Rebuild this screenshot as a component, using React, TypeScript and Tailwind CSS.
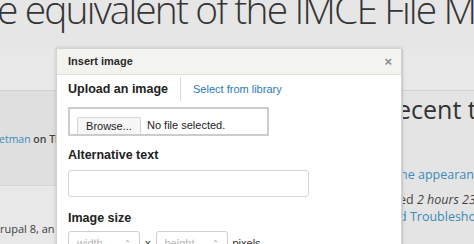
import React from 'react';

function NumberBox({ placeholder }: { placeholder: string }) {
  return (
    <div className="flex h-[26px] w-[72px] items-center justify-between rounded-[3px] border border-[#cfcfcf] bg-white px-2">
      <span className="text-[11px] text-[#b5b5b5]">{placeholder}</span>
      <span className="text-[8px] text-[#999]">⌃</span>
    </div>
  );
}

export default function App() {
  return (
    <div className="relative h-[244px] w-[474px] overflow-hidden bg-[#e6e6e6] font-['Open_Sans',sans-serif]">
      {/* Page title, cropped */}
      <div className="h-[49px] overflow-hidden whitespace-nowrap">
        <div className="-ml-[3px] -mt-[19px] text-[39px] font-light leading-[56px] tracking-[-1.9px] text-[#353535]">
          e equivalent of the IMCE File Ma
        </div>
      </div>

      {/* Page body behind the dialog */}
      <div className="flex h-[195px]">
        {/* left column */}
        <div className="flex w-[57px] shrink-0 flex-col overflow-hidden whitespace-nowrap">
          <div className="h-[42px] border-b border-[#d2d2d2] bg-[#e8e8e8]" />
          <div className="h-[95px] border-b border-[#d6d6d6] bg-[#dfdfdf] pt-[41px]">
            <div className="-ml-[1px] text-[10.5px] leading-[14px]">
              <span className="text-[#3d8bb8]">etman</span>
              <span className="font-semibold text-[#444]"> on Th</span>
            </div>
          </div>
          <div className="flex-1 bg-[#e8e8e8]">
            <div className="mt-[36px] text-[11px] leading-[14px] text-[#3e3e3e]">rupal 8, an</div>
          </div>
        </div>

        <div className="w-[345px] shrink-0" />

        {/* right column */}
        <div className="flex min-w-0 flex-1 flex-col overflow-hidden whitespace-nowrap border-l border-[#d6d6d6]">
          <div className="h-[42px] border-b border-[#d2d2d2] bg-[#e8e8e8]" />
          <div className="flex-1 bg-[#e4e4e4]">
            <div className="-ml-[6px] mt-[2px] text-[25px] leading-[32px] text-[#333]">ecent t</div>
            <div className="-ml-[3px] mt-[42px] text-[12.5px] leading-[16px] text-[#3d8bb8]">ne appearan</div>
            <div className="-ml-[4px] mt-[9px] text-[12.5px] leading-[16px] text-[#444]">
              ed <i>2 hours 23 m</i>
            </div>
            <div className="-ml-[4px] mt-[1px] text-[12.5px] leading-[16px] text-[#3d8bb8]">d Troubleshoo</div>
          </div>
        </div>
      </div>

      {/* Insert image dialog */}
      <div className="absolute left-[56px] top-[48px] h-[210px] w-[346px] overflow-hidden border border-[#d4d4d4] bg-white font-['Liberation_Sans',Arial,sans-serif] shadow-[0_0_4px_rgba(0,0,0,0.15)]">
        <div className="flex h-[26px] items-center justify-between border-b border-[#e2e2dd] bg-[#f3f3f0] pl-[11px] pr-[9px]">
          <span className="text-[11px] font-bold text-[#2b2b2b]">Insert image</span>
          <span className="text-[13px] font-bold leading-none text-[#8a8a8a]">×</span>
        </div>

        <div className="px-[11px]">
          <div className="flex h-[28px] items-center">
            <span className="text-[12.5px] font-bold text-[#222]">Upload an image</span>
            <span className="ml-[12px] h-[24px] border-l border-[#dcdcdc]" />
            <span className="ml-[12px] text-[11px] text-[#2a7ab8]">Select from library</span>
          </div>

          <div className="mt-[4px] flex h-[29px] w-[201px] items-end border-2 border-[#cccccc] pl-[7px]">
            <div className="flex h-[17px] w-[64px] items-center justify-center rounded-t-[2px] border border-b-0 border-[#d6d6d6] bg-[#f7f7f7] text-[11px] text-[#222]">
              Browse...
            </div>
            <span className="mb-[1px] ml-[6px] text-[11px] text-[#222]">No file selected.</span>
          </div>

          <div className="mt-[10px] text-[12.5px] font-bold text-[#222]">Alternative text</div>
          <div className="mt-[5px] h-[27px] w-[241px] rounded-[3px] border border-[#d6d6d6] bg-white" />

          <div className="mt-[12px] text-[12.5px] font-bold text-[#222]">Image size</div>
          <div className="mt-[3px] flex items-center gap-[5px]">
            <NumberBox placeholder="width" />
            <span className="text-[11px] text-[#333]">x</span>
            <NumberBox placeholder="height" />
            <span className="text-[11px] text-[#333]">pixels</span>
          </div>
        </div>
      </div>
    </div>
  );
}
